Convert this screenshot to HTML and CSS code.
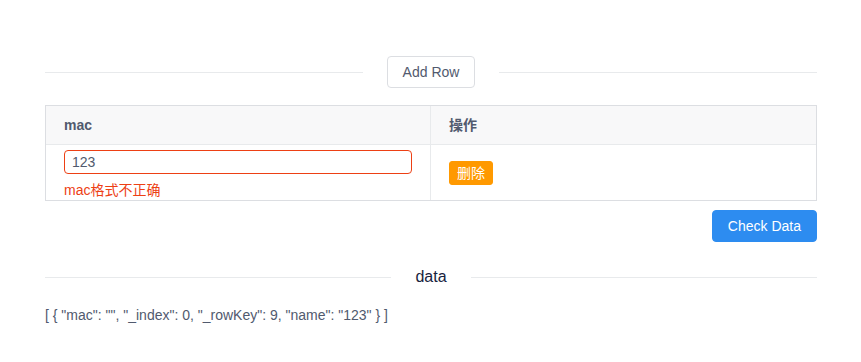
FILE: index.html
```html
<!DOCTYPE html>
<html>
<head>
<meta charset="utf-8">
<link rel="stylesheet" href="styles.css">
</head>
<body>
<div class="page">
  <div class="divider divider-top">
    <span class="divider-text"><button class="btn btn-default">Add Row</button></span>
  </div>
  <div class="table">
    <div class="cell head">mac</div>
    <div class="cell head last">操作</div>
    <div class="cell body">
      <input class="input input-error" type="text" value="123">
      <div class="error-tip">mac格式不正确</div>
    </div>
    <div class="cell body last center">
      <button class="btn btn-warning btn-small">删除</button>
    </div>
  </div>
  <div class="actions">
    <button class="btn btn-primary">Check Data</button>
  </div>
  <div class="divider divider-data">
    <span class="divider-text">data</span>
  </div>
  <div class="json">[ { "mac": "", "_index": 0, "_rowKey": 9, "name": "123" } ]</div>
</div>
</body>
</html>
```

FILE: styles.css
```css
* { box-sizing: border-box; }
html, body { margin: 0; background: #fff; }
body {
  font-family: "Liberation Sans", Arial, "Noto Sans CJK SC", sans-serif;
  font-size: 14px;
  color: #515a6e;
}
.page {
  padding: 56px 44px 0 45px;
}
.divider {
  display: flex;
  align-items: center;
}
.divider::before, .divider::after {
  content: "";
  flex: 1;
  border-top: 1px solid #e8eaec;
}
.divider-text {
  padding: 0 24px;
  display: flex;
}
.divider-data {
  margin-top: 23px;
  height: 24px;
}
.divider-data .divider-text {
  font-size: 16px;
  line-height: 24px;
  color: #17233d;
}
.btn {
  font-family: "Liberation Sans", Arial, "Noto Sans CJK SC", sans-serif;
  font-size: 14px;
  height: 32px;
  line-height: 30px;
  padding: 0 15px;
  border-radius: 4px;
  border: 1px solid #dcdee2;
  background: #fff;
  color: #515a6e;
  cursor: pointer;
  margin: 0;
  white-space: nowrap;
}
.btn-primary {
  background: #2d8cf0;
  border-color: #2d8cf0;
  color: #fff;
}
.btn-warning {
  background: #ff9900;
  border-color: #ff9900;
  color: #fff;
}
.btn-small {
  height: 24px;
  line-height: 22px;
  padding: 0 7px;
  border-radius: 3px;
}
.table {
  margin-top: 17px;
  display: grid;
  grid-template-columns: 1fr 1fr;
  border: 1px solid #dcdee2;
  border-bottom-color: #dcdee2;
}
.cell {
  padding: 0 18px;
  border-right: 1px solid #e8eaec;
}
.cell.last { border-right: none; }
.head {
  height: 39px;
  line-height: 38px;
  background: #f8f8f9;
  border-bottom: 1px solid #e8eaec;
  font-weight: bold;
}
.body {
  height: 55px;
  padding-top: 5px;
}
.center {
  padding-top: 0;
  display: flex;
  align-items: center;
}
.input {
  display: block;
  width: 100%;
  height: 24px;
  padding: 0 7px;
  font-family: "Liberation Sans", Arial, "Noto Sans CJK SC", sans-serif;
  font-size: 14px;
  color: #515a6e;
  border: 1px solid #dcdee2;
  border-radius: 4px;
  outline: none;
  background: #fff;
}
.input-error { border-color: #ed4014; }
.error-tip {
  margin-top: 8px;
  line-height: 16px;
  color: #ed4014;
}
.actions {
  display: flex;
  justify-content: flex-end;
  margin-top: 9px;
}
.json {
  margin-top: 16px;
  line-height: 20px;
}
```
